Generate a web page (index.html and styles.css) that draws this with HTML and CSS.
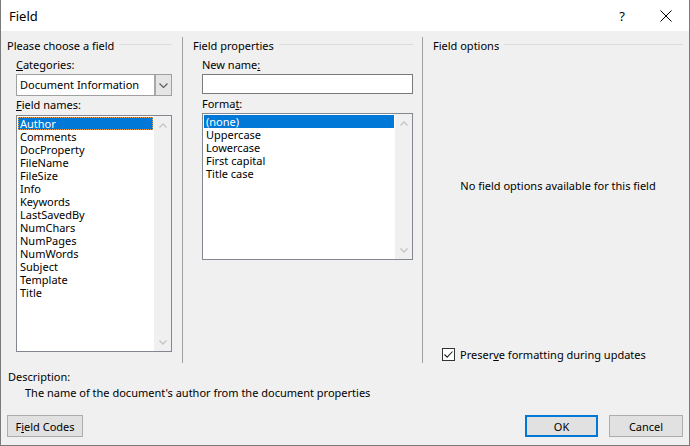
FILE: index.html
```html
<!DOCTYPE html>
<html>
<head>
<meta charset="utf-8">
<link rel="stylesheet" href="styles.css">
</head>
<body>
<div class="window">
  <div class="titlebar">
    <span class="title">Field</span>
    <span class="help">?</span>
    <span class="close">
      <svg width="12" height="12" viewBox="0 0 12 12"><path d="M0.5 0.5 L11.5 11.5 M11.5 0.5 L0.5 11.5" stroke="#000" stroke-width="1" fill="none"/></svg>
    </span>
  </div>
  <div class="body">
    <div class="columns">
      <section class="col col1">
        <div class="group-head"><span>Please choose a field</span><span class="rule"></span></div>
        <div class="label lbl-top"><u>C</u>ategories:</div>
        <div class="combo">
          <span class="combo-text">Document Information</span>
          <span class="combo-btn">
            <svg width="9" height="5" viewBox="0 0 9 5"><path d="M0.5 0.5 L4.5 4.5 L8.5 0.5" stroke="#606060" stroke-width="1.2" fill="none"/></svg>
          </span>
        </div>
        <div class="label lbl-names"><u>F</u>ield names:</div>
        <div class="listbox names">
          <ul class="items">
            <li class="sel focus">Author</li>
            <li>Comments</li>
            <li>DocProperty</li>
            <li>FileName</li>
            <li>FileSize</li>
            <li>Info</li>
            <li>Keywords</li>
            <li>LastSavedBy</li>
            <li>NumChars</li>
            <li>NumPages</li>
            <li>NumWords</li>
            <li>Subject</li>
            <li>Template</li>
            <li>Title</li>
          </ul>
          <div class="vscroll">
            <svg width="8" height="5" viewBox="0 0 8 5"><path d="M0.5 4.5 L4 1 L7.5 4.5" stroke="#c5c5c5" stroke-width="1.4" fill="none"/></svg>
            <svg width="8" height="5" viewBox="0 0 8 5"><path d="M0.5 0.5 L4 4 L7.5 0.5" stroke="#c5c5c5" stroke-width="1.4" fill="none"/></svg>
          </div>
        </div>
      </section>
      <section class="col col2">
        <div class="group-head"><span>Field properties</span><span class="rule"></span></div>
        <div class="label lbl-top">New name<u>:</u></div>
        <div class="textbox"></div>
        <div class="label lbl-format">Forma<u>t</u>:</div>
        <div class="listbox format">
          <ul class="items">
            <li class="sel">(none)</li>
            <li>Uppercase</li>
            <li>Lowercase</li>
            <li>First capital</li>
            <li>Title case</li>
          </ul>
          <div class="vscroll">
            <svg width="8" height="5" viewBox="0 0 8 5"><path d="M0.5 4.5 L4 1 L7.5 4.5" stroke="#c5c5c5" stroke-width="1.4" fill="none"/></svg>
            <svg width="8" height="5" viewBox="0 0 8 5"><path d="M0.5 0.5 L4 4 L7.5 0.5" stroke="#c5c5c5" stroke-width="1.4" fill="none"/></svg>
          </div>
        </div>
      </section>
      <section class="col col3">
        <div class="group-head"><span>Field options</span><span class="rule"></span></div>
        <div class="no-options">No field options available for this field</div>
        <label class="check-row">
          <span class="checkbox">
            <svg width="11" height="11" viewBox="0 0 11 11"><path d="M1.5 5.5 L4.2 8.2 L9.5 2.5" stroke="#222" stroke-width="1.1" fill="none"/></svg>
          </span>
          <span>Preser<u>v</u>e formatting during updates</span>
        </label>
      </section>
    </div>
    <div class="description">
      <div class="desc-label">Description:</div>
      <div class="desc-text">The name of the document's author from the document properties</div>
    </div>
    <div class="footer">
      <button class="btn btn-codes">F<u>i</u>eld Codes</button>
      <div class="footer-right">
        <button class="btn btn-default">OK</button>
        <button class="btn">Cancel</button>
      </div>
    </div>
  </div>
</div>
</body>
</html>
```

FILE: styles.css
```css
* { box-sizing: border-box; }
html, body { margin: 0; padding: 0; }
body {
  font-family: "Noto Sans", "Open Sans", sans-serif;
  font-size: 11px;
  color: #000;
  background: #f0f0f0;
}
u { text-decoration: underline; text-underline-offset: 1px; }

.window {
  width: 690px;
  height: 446px;
  border: 1px solid #7a7a7a;
  border-top: none;
  background: #f0f0f0;
  display: flex;
  flex-direction: column;
}

.titlebar {
  height: 31px;
  background: #fff;
  display: flex;
  align-items: center;
  padding-left: 8px;
  flex-shrink: 0;
}
.title { font-size: 13px; flex: 1; }
.help { font-size: 13px; width: 14px; margin-right: 31px; text-align: center; }
.close { width: 12px; height: 12px; margin-right: 17px; display: flex; }

.body { flex: 1; display: flex; flex-direction: column; }

.columns {
  display: flex;
  margin-top: 6px;
  height: 326px;
}
.col { display: flex; flex-direction: column; }
.col1 { width: 181px; padding-left: 6px; padding-right: 10px; }
.col2 { width: 240px; border-left: 1px solid #a0a0a0; padding-left: 10px; padding-right: 9px; }
.col3 { flex: 1; border-left: 1px solid #a0a0a0; padding-left: 10px; padding-right: 6px; }

.group-head {
  height: 16px;
  display: flex;
  align-items: center;
  white-space: nowrap;
}
.group-head .rule {
  flex: 1;
  height: 1px;
  background: #dcdcdc;
  margin-left: 5px;
  margin-top: -1px;
}

.label { height: 16px; line-height: 16px; margin-left: 9px; white-space: nowrap; }
.lbl-top { margin-top: 4px; margin-bottom: 1px; }
.lbl-names { margin-top: 1px; margin-bottom: 2px; }
.lbl-format { margin-top: 2px; margin-bottom: 1px; }

.combo {
  margin-left: 9px;
  height: 22px;
  border: 1px solid #a0a0a0;
  background: #fff;
  display: flex;
}
.combo-text { flex: 1; padding-left: 3px; line-height: 20px; }
.combo-btn {
  width: 17px;
  background: #e5e5e5;
  border: 2px solid #a8a8a8;
  border-right: none;
  border-top: none;
  border-bottom: none;
  display: flex;
  align-items: center;
  justify-content: center;
}

.textbox {
  margin-left: 9px;
  height: 20px;
  border: 1px solid #7a7a7a;
  background: #fff;
}

.listbox {
  margin-left: 9px;
  border: 1px solid #828790;
  background: #fff;
  display: flex;
}
.names { height: 237px; }
.format { height: 147px; }
.items {
  list-style: none;
  margin: 0;
  padding: 1px;
  flex: 1;
}
.format .items { padding-top: 1px; }
.items li {
  height: 13px;
  line-height: 13px;
  padding-left: 2px;
  white-space: nowrap;
}
.items li.sel { background: #0078d7; color: #fff; }
.items li.focus { outline: 1px dotted #f0a050; outline-offset: -1px; }
.vscroll {
  width: 17px;
  background: #f0f0f0;
  display: flex;
  flex-direction: column;
  justify-content: space-between;
  align-items: center;
  padding: 7px 0 6px;
}

.no-options {
  margin-top: 125px;
  height: 16px;
  line-height: 16px;
  text-align: center;
}
.check-row {
  margin-top: auto;
  margin-bottom: 1px;
  margin-left: 9px;
  height: 16px;
  display: flex;
  align-items: center;
  gap: 5px;
}
.checkbox {
  width: 13px;
  height: 13px;
  border: 1px solid #333;
  background: #fff;
  display: flex;
  align-items: center;
  justify-content: center;
}

.description { padding-top: 6px; }
.desc-label { height: 16px; line-height: 16px; padding-left: 7px; }
.desc-text { height: 16px; line-height: 16px; padding-left: 24px; }

.footer {
  margin-top: 14px;
  display: flex;
  justify-content: space-between;
  padding: 0 6px;
}
.footer-right { display: flex; gap: 11px; }
.btn {
  font-family: inherit;
  font-size: 11px;
  color: #000;
  height: 22px;
  width: 74px;
  background: #e1e1e1;
  border: 1px solid #adadad;
  padding: 0;
}
.btn-codes { width: 76px; }
.btn-default { width: 73px; border: 2px solid #0078d7; }
```
